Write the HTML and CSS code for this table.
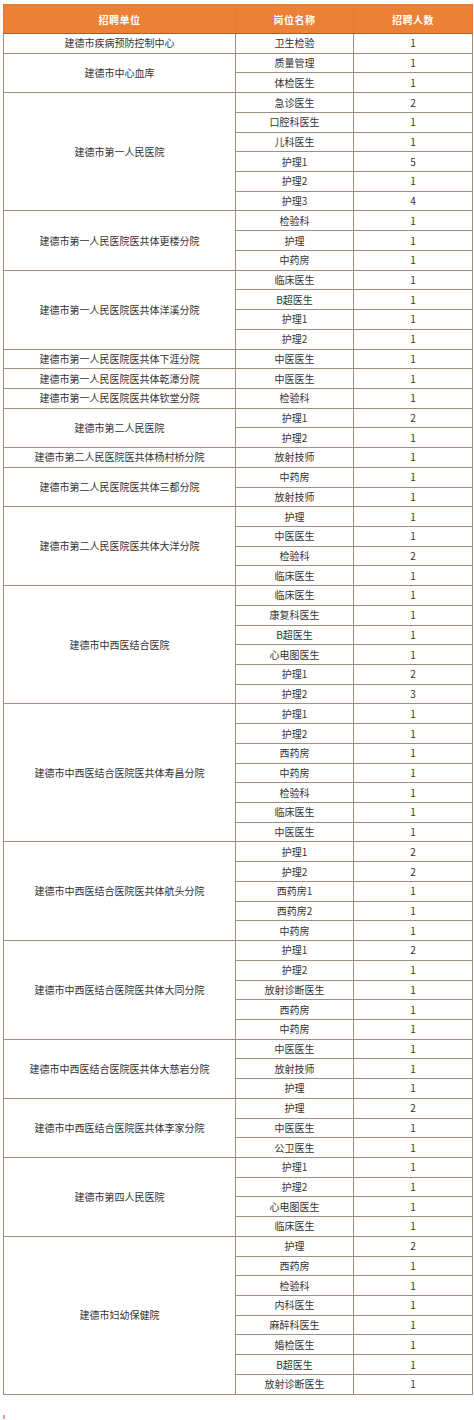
FILE: index.html
```html
<!DOCTYPE html>
<html lang="zh-CN">
<head>
<meta charset="utf-8">
<title>招聘岗位</title>
<link rel="stylesheet" href="styles.css">
</head>
<body>
<table class="jobs">
  <colgroup><col class="c1"><col class="c2"><col class="c3"></colgroup>
  <thead>
    <tr><th>招聘单位</th><th>岗位名称</th><th>招聘人数</th></tr>
  </thead>
  <tbody>
    <tr><td>建德市疾病预防控制中心</td><td>卫生检验</td><td>1</td></tr>

    <tr><td rowspan="2">建德市中心血库</td><td>质量管理</td><td>1</td></tr>
    <tr><td>体检医生</td><td>1</td></tr>

    <tr><td rowspan="6">建德市第一人民医院</td><td>急诊医生</td><td>2</td></tr>
    <tr><td>口腔科医生</td><td>1</td></tr>
    <tr><td>儿科医生</td><td>1</td></tr>
    <tr><td>护理1</td><td>5</td></tr>
    <tr><td>护理2</td><td>1</td></tr>
    <tr><td>护理3</td><td>4</td></tr>

    <tr><td rowspan="3">建德市第一人民医院医共体更楼分院</td><td>检验科</td><td>1</td></tr>
    <tr><td>护理</td><td>1</td></tr>
    <tr><td>中药房</td><td>1</td></tr>

    <tr><td rowspan="4">建德市第一人民医院医共体洋溪分院</td><td>临床医生</td><td>1</td></tr>
    <tr><td>B超医生</td><td>1</td></tr>
    <tr><td>护理1</td><td>1</td></tr>
    <tr><td>护理2</td><td>1</td></tr>

    <tr><td>建德市第一人民医院医共体下涯分院</td><td>中医医生</td><td>1</td></tr>
    <tr><td>建德市第一人民医院医共体乾潭分院</td><td>中医医生</td><td>1</td></tr>
    <tr><td>建德市第一人民医院医共体钦堂分院</td><td>检验科</td><td>1</td></tr>

    <tr><td rowspan="2">建德市第二人民医院</td><td>护理1</td><td>2</td></tr>
    <tr><td>护理2</td><td>1</td></tr>

    <tr><td>建德市第二人民医院医共体杨村桥分院</td><td>放射技师</td><td>1</td></tr>

    <tr><td rowspan="2">建德市第二人民医院医共体三都分院</td><td>中药房</td><td>1</td></tr>
    <tr><td>放射技师</td><td>1</td></tr>

    <tr><td rowspan="4">建德市第二人民医院医共体大洋分院</td><td>护理</td><td>1</td></tr>
    <tr><td>中医医生</td><td>1</td></tr>
    <tr><td>检验科</td><td>2</td></tr>
    <tr><td>临床医生</td><td>1</td></tr>

    <tr><td rowspan="6">建德市中西医结合医院</td><td>临床医生</td><td>1</td></tr>
    <tr><td>康复科医生</td><td>1</td></tr>
    <tr><td>B超医生</td><td>1</td></tr>
    <tr><td>心电图医生</td><td>1</td></tr>
    <tr><td>护理1</td><td>2</td></tr>
    <tr><td>护理2</td><td>3</td></tr>

    <tr><td rowspan="7">建德市中西医结合医院医共体寿昌分院</td><td>护理1</td><td>1</td></tr>
    <tr><td>护理2</td><td>1</td></tr>
    <tr><td>西药房</td><td>1</td></tr>
    <tr><td>中药房</td><td>1</td></tr>
    <tr><td>检验科</td><td>1</td></tr>
    <tr><td>临床医生</td><td>1</td></tr>
    <tr><td>中医医生</td><td>1</td></tr>

    <tr><td rowspan="5">建德市中西医结合医院医共体航头分院</td><td>护理1</td><td>2</td></tr>
    <tr><td>护理2</td><td>2</td></tr>
    <tr><td>西药房1</td><td>1</td></tr>
    <tr><td>西药房2</td><td>1</td></tr>
    <tr><td>中药房</td><td>1</td></tr>

    <tr><td rowspan="5">建德市中西医结合医院医共体大同分院</td><td>护理1</td><td>2</td></tr>
    <tr><td>护理2</td><td>1</td></tr>
    <tr><td>放射诊断医生</td><td>1</td></tr>
    <tr><td>西药房</td><td>1</td></tr>
    <tr><td>中药房</td><td>1</td></tr>

    <tr><td rowspan="3">建德市中西医结合医院医共体大慈岩分院</td><td>中医医生</td><td>1</td></tr>
    <tr><td>放射技师</td><td>1</td></tr>
    <tr><td>护理</td><td>1</td></tr>

    <tr><td rowspan="3">建德市中西医结合医院医共体李家分院</td><td>护理</td><td>2</td></tr>
    <tr><td>中医医生</td><td>1</td></tr>
    <tr><td>公卫医生</td><td>1</td></tr>

    <tr><td rowspan="4">建德市第四人民医院</td><td>护理1</td><td>1</td></tr>
    <tr><td>护理2</td><td>1</td></tr>
    <tr><td>心电图医生</td><td>1</td></tr>
    <tr><td>临床医生</td><td>1</td></tr>

    <tr><td rowspan="8">建德市妇幼保健院</td><td>护理</td><td>2</td></tr>
    <tr><td>西药房</td><td>1</td></tr>
    <tr><td>检验科</td><td>1</td></tr>
    <tr><td>内科医生</td><td>1</td></tr>
    <tr><td>麻醉科医生</td><td>1</td></tr>
    <tr><td>婚检医生</td><td>1</td></tr>
    <tr><td>B超医生</td><td>1</td></tr>
    <tr><td>放射诊断医生</td><td>1</td></tr>
  </tbody>
</table>
<div class="mark"></div>
</body>
</html>
```

FILE: styles.css
```css
html, body {
  margin: 0;
  padding: 0;
  background: #ffffff;
}

body {
  padding: 4px 0 0 3px;
  font-family: "Noto Sans CJK SC", "Noto Sans", sans-serif;
}

.jobs {
  border-collapse: collapse;
  table-layout: fixed;
  width: 469px;
  font-size: 10px;
  color: #333333;
}

.c1 { width: 232px; }
.c2 { width: 118px; }
.c3 { width: 119px; }

.jobs th {
  height: 28px;
  padding: 0;
  background: #ec8034;
  color: #ffffff;
  font-weight: bold;
  font-size: 10px;
  letter-spacing: 0.5px;
  text-align: center;
  vertical-align: middle;
  border: 1px solid #e27a30;
  border-bottom: 1px solid #a85f2a;
}

.jobs td {
  height: 18.72px;
  padding: 0;
  line-height: 12px;
  text-align: center;
  vertical-align: middle;
  border: 1px solid #9d9082;
  white-space: nowrap;
}

.mark {
  width: 2px;
  height: 4px;
  margin-top: 20px;
  margin-left: 0;
  background: #e8a0a0;
}
```
